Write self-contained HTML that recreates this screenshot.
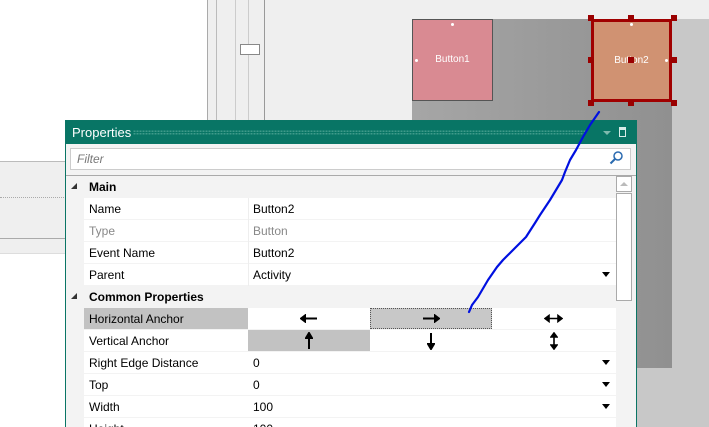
<!DOCTYPE html>
<html><head><style>
*{margin:0;padding:0;box-sizing:border-box}
html,body{width:709px;height:427px;overflow:hidden}
body{background:#efefef;position:relative;font-family:"Liberation Sans",sans-serif;font-size:12px;color:#000}
.a{position:absolute}
.row{position:absolute;left:84px;width:532px;height:21px;background:#fff}
.row .n{position:absolute;left:5px;top:4px}
.row .v{position:absolute;left:169px;top:4px}
.row .dd{position:absolute;right:6px;top:8px;width:0;height:0;border-left:4px solid transparent;border-right:4px solid transparent;border-top:5px solid #000}
.cat{position:absolute;left:66px;width:550px;height:22px;font-weight:bold}
.cat .t{position:absolute;left:5px;top:7px;width:0;height:0;border-left:6px solid transparent;border-bottom:6px solid #333}
.cat span{position:absolute;left:23px;top:4px}
.h{position:absolute;width:6px;height:6px;background:#9a0000}
</style></head><body>
<!-- left white panel -->
<div class="a" style="left:0;top:0;width:208px;height:161px;background:#fff;border-right:1px solid #aaa"></div>
<div class="a" style="left:0;top:161px;width:66px;height:1px;background:#bbb"></div>
<div class="a" style="left:0;top:197px;width:66px;height:0;border-top:1px dotted #aaa"></div>
<div class="a" style="left:0;top:238px;width:66px;height:1px;background:#aaa"></div>
<div class="a" style="left:0;top:253px;width:66px;height:174px;background:#fff;border-top:1px solid #ddd"></div>
<!-- scroll lines -->
<div class="a" style="left:216px;top:0;width:1px;height:121px;background:#bbb"></div>
<div class="a" style="left:235px;top:0;width:1px;height:121px;background:#ccc"></div>
<div class="a" style="left:248px;top:0;width:1px;height:121px;background:#ccc"></div>
<div class="a" style="left:264px;top:0;width:1px;height:121px;background:#999"></div>
<div class="a" style="left:240px;top:44px;width:20px;height:11px;background:#fff;border:1px solid #888"></div>
<!-- design area -->
<div class="a" style="left:672px;top:19px;width:37px;height:408px;background:#c8c8c8"></div>
<div class="a" style="left:412px;top:19px;width:260px;height:349px;background:linear-gradient(90deg,#a6a6a6,#909090)"></div>
<div class="a" style="left:636px;top:368px;width:36px;height:59px;background:#c8c8c8"></div>
<div class="a" style="left:412px;top:19px;width:81px;height:82px;background:#d98a92;border:1px solid #555;color:#fff;font-size:10px;text-align:center;line-height:80px">Button1</div>
<div class="a" style="left:451px;top:23px;width:3px;height:3px;background:#fff;border-radius:2px"></div>
<div class="a" style="left:415px;top:59px;width:3px;height:3px;background:#fff;border-radius:2px"></div>
<div class="a" style="left:591px;top:19px;width:81px;height:83px;background:#d09272;border:3px solid #a00000;color:#fff;font-size:10px;text-align:center;line-height:77px">Button2</div>
<div class="a" style="left:630px;top:23px;width:3px;height:3px;background:#fff;border-radius:2px"></div>
<div class="a" style="left:665px;top:59px;width:3px;height:3px;background:#fff;border-radius:2px"></div>
<div class="h" style="left:588px;top:15px"></div><div class="h" style="left:628px;top:15px"></div><div class="h" style="left:671px;top:15px"></div>
<div class="h" style="left:588px;top:57px"></div><div class="h" style="left:628px;top:57px"></div><div class="h" style="left:671px;top:57px"></div>
<div class="h" style="left:588px;top:100px"></div><div class="h" style="left:628px;top:100px"></div><div class="h" style="left:671px;top:100px"></div>
<!-- properties panel -->
<div class="a" style="left:65px;top:120px;width:572px;height:310px;background:#f3f3f3;border:1px solid #0a7565"></div>
<div class="a" style="left:66px;top:121px;width:570px;height:23px;background:#087565"></div>
<div class="a" style="left:72px;top:125px;color:#fff;font-size:13px">Properties</div>
<div class="a" style="left:133px;top:130px;width:453px;height:5px;background-image:radial-gradient(#3f9a8a 45%,transparent 50%);background-size:3px 2.5px"></div>
<div class="a" style="left:603px;top:131px;width:0;height:0;border-left:4px solid transparent;border-right:4px solid transparent;border-top:4px solid #7fb9ae"></div>
<div class="a" style="left:619px;top:127px;width:7px;height:10px;border:1px solid #d8ece8;border-top:3px solid #d8ece8"></div>
<div class="a" style="left:70px;top:148px;width:561px;height:22px;background:#fff;border:1px solid #ccc"></div>
<div class="a" style="left:77px;top:152px;color:#777;font-style:italic">Filter</div>
<svg class="a" style="left:609px;top:151px" width="14" height="14"><circle cx="9" cy="5" r="4" fill="none" stroke="#2a6ab0" stroke-width="1.5"/><line x1="6" y1="8" x2="1.5" y2="12.5" stroke="#2a6ab0" stroke-width="2"/></svg>
<div class="a" style="left:66px;top:175px;width:570px;height:1px;background:#aaa"></div>
<!-- scrollbar -->
<div class="a" style="left:616px;top:176px;width:16px;height:16px;background:#fff;border:1px solid #aaa"></div>
<div class="a" style="left:620px;top:182px;width:0;height:0;border-left:4px solid transparent;border-right:4px solid transparent;border-bottom:4px solid #bbb"></div>
<div class="a" style="left:616px;top:193px;width:16px;height:108px;background:#fff;border:1px solid #aaa"></div>
<div class="cat" style="top:176px"><div class="t"></div><span>Main</span></div>
<div class="row" style="top:198px"><span class="n">Name</span><span class="v">Button2</span></div>
<div class="row" style="top:220px;color:#888"><span class="n">Type</span><span class="v">Button</span></div>
<div class="row" style="top:242px"><span class="n">Event Name</span><span class="v">Button2</span></div>
<div class="row" style="top:264px"><span class="n">Parent</span><span class="v">Activity</span><div class="dd"></div></div>
<div class="cat" style="top:286px"><div class="t"></div><span>Common Properties</span></div>
<div class="row" style="top:308px"><div class="a" style="left:0;top:0;width:164px;height:21px;background:#c2c2c2"></div><span class="n">Horizontal Anchor</span>
<div class="a" style="left:286px;top:0;width:122px;height:21px;background:#c8c8c8;border:1px dotted #555"></div>
<svg class="a" style="left:216px;top:6px" width="18" height="9"><path d="M2 4.5H17M1 4.5L5 1.5V7.5Z" stroke="#000" stroke-width="2" fill="#000"/></svg>
<svg class="a" style="left:338px;top:6px" width="18" height="9"><path d="M1 4.5H16M17 4.5L13 1.5V7.5Z" stroke="#000" stroke-width="2" fill="#000"/></svg>
<svg class="a" style="left:460px;top:6px" width="19" height="9"><path d="M3 4.5H16M1 4.5L5 1.5V7.5ZM18 4.5L14 1.5V7.5Z" stroke="#000" stroke-width="1.6" fill="#000"/></svg></div>
<div class="row" style="top:330px"><span class="n">Vertical Anchor</span><div class="a" style="left:164px;top:0;width:122px;height:21px;background:#c2c2c2"></div>
<svg class="a" style="left:221px;top:2px" width="8" height="18"><path d="M4 17V3M1 6L4 1L7 6Z" stroke="#000" stroke-width="2" fill="#000"/></svg>
<svg class="a" style="left:343px;top:2px" width="8" height="18"><path d="M4 1V15M1 12L4 17L7 12Z" stroke="#000" stroke-width="2" fill="#000"/></svg>
<svg class="a" style="left:466px;top:2px" width="8" height="18"><path d="M4 2V16M1 5L4 1L7 5ZM1 13L4 17L7 13Z" stroke="#000" stroke-width="1.6" fill="#000"/></svg></div>
<div class="row" style="top:352px"><span class="n">Right Edge Distance</span><span class="v">0</span><div class="dd"></div></div>
<div class="row" style="top:374px"><span class="n">Top</span><span class="v">0</span><div class="dd"></div></div>
<div class="row" style="top:396px"><span class="n">Width</span><span class="v">100</span><div class="dd"></div></div>
<div class="row" style="top:418px"><span class="n">Height</span><span class="v">100</span></div>
<div class="a" style="left:248px;top:198px;width:1px;height:88px;background:#eee"></div>
<svg class="a" style="left:0;top:0" width="709" height="427"><path d="M599 112 L590 125 L583 137 L576 150 L570 160 L565 172 L562 180 L556 190 L550 200 L540 215 L535 223 L526 237 L515 248 L503 260 L497 267 L488 280 L478 297 L472 305 L469 312" fill="none" stroke="#0010e0" stroke-width="2.2" stroke-linejoin="round" stroke-linecap="round"/></svg>
</body></html>
